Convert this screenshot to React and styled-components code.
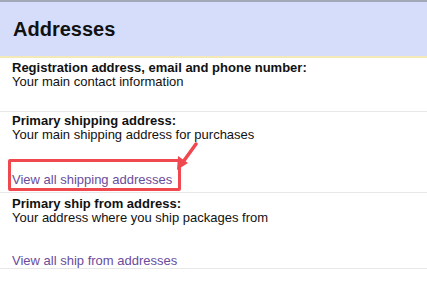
import React from 'react'
import styled, { createGlobalStyle } from 'styled-components'

const Global = createGlobalStyle`
  body {
    margin: 0;
    background: #ffffff;
    font-family: Arial, "Liberation Sans", sans-serif;
  }
`

const Page = styled.div`
  width: 427px;
  height: 281px;
  overflow: hidden;
  border-top: 2px solid #a3a8b8;
  box-sizing: border-box;
`

const Header = styled.div`
  background: #d5ddfb;
  height: 56px;
  border-bottom: 2px solid #f3e8b8;
  display: flex;
  align-items: center;
  padding-left: 13px;
  box-sizing: border-box;
`

const Title = styled.h1`
  margin: 0;
  font-size: 20px;
  font-weight: bold;
  color: #111111;
  padding-top: 1px;
`

const Section = styled.div`
  padding: ${p => p.pt}px 0 ${p => p.pb}px 12px;
  height: ${p => p.h}px;
  box-sizing: border-box;
  border-bottom: 1px solid #e8e8e8;
  display: flex;
  flex-direction: column;
`

const Label = styled.div`
  font-size: 13px;
  font-weight: bold;
  color: #111111;
  line-height: 14px;
`

const Desc = styled.div`
  font-size: 13px;
  color: #111111;
  line-height: 14px;
`

const Link = styled.a`
  font-size: 13px;
  color: #6a4c9c;
  text-decoration: none;
  line-height: 14px;
  margin-top: auto;
  position: relative;
  align-self: flex-start;
`

const Highlight = styled.span`
  position: absolute;
  left: -4px;
  top: -14px;
  right: -9px;
  bottom: -4px;
  border: 3px solid #f0484f;
  border-radius: 2px;
`

const Arrow = styled.svg`
  position: absolute;
  left: 161px;
  top: -31px;
`

export default function App() {
  return (
    <>
      <Global />
      <Page>
        <Header>
          <Title>Addresses</Title>
        </Header>
        <Section h={54} pt={3} pb={0}>
          <Label>Registration address, email and phone number:</Label>
          <Desc>Your main contact information</Desc>
        </Section>
        <Section h={81} pt={2} pb={5}>
          <Label>Primary shipping address:</Label>
          <Desc>Your main shipping address for purchases</Desc>
          <Link href="#">
            View all shipping addresses
            <Highlight />
            <Arrow width="28" height="32" viewBox="0 0 28 32">
              <line x1="23" y1="2" x2="10" y2="20" stroke="#f0484f" strokeWidth="3.5" strokeLinecap="round" />
              <polygon points="4,28 5,14 15,21" fill="#f0484f" />
            </Arrow>
          </Link>
        </Section>
        <Section h={76} pt={4} pb={0}>
          <Label>Primary ship from address:</Label>
          <Desc>Your address where you ship packages from</Desc>
          <Link href="#">View all ship from addresses</Link>
        </Section>
      </Page>
    </>
  )
}
